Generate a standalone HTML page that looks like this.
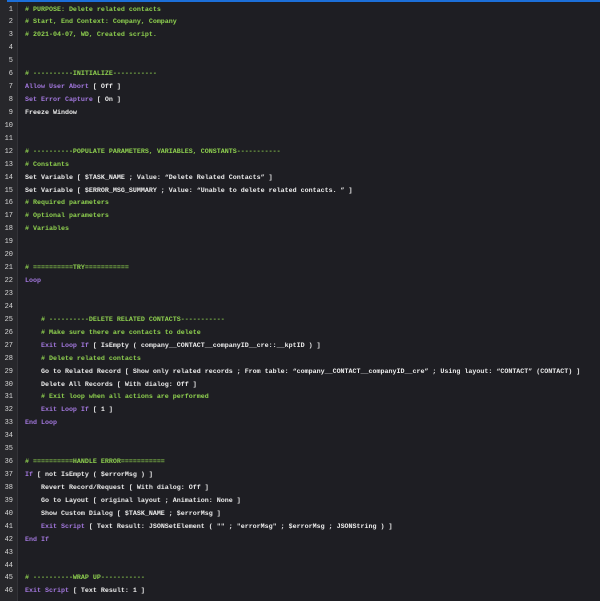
<!DOCTYPE html>
<html><head><style>
html,body{margin:0;padding:0;}
body{width:600px;height:601px;background:#1e1e23;position:relative;overflow:hidden;font-family:"Liberation Mono",monospace;}
#bar{position:absolute;left:7px;top:0;width:593px;height:2px;background:#1c6fd9;}
#gut{position:absolute;left:0;top:0;width:17px;height:601px;background:#27272b;border-right:1px solid #333338;}
.l{position:absolute;left:0;height:13px;width:600px;font-size:6.67px;line-height:13px;white-space:pre;color:#ededed;font-weight:bold;}
.n{position:absolute;left:0;width:13px;text-align:right;color:#d8d8d8;font-size:7px;font-weight:normal;}
.t{position:absolute;left:25px;}
.c{color:#8fd14f}.p{color:#a277dd}
</style></head><body>
<div id="gut"></div><div id="bar"></div>
<div id="code"></div>
<script>
var L=[
['c','# PURPOSE: Delete related contacts'],
['c','# Start, End Context: Company, Company'],
['c','# 2021-04-07, WD, Created script.'],
[],[],
['c','# ----------INITIALIZE-----------'],
['p','Allow User Abort',' [ Off ]'],
['p','Set Error Capture',' [ On ]'],
['w','Freeze Window'],
[],[],
['c','# ----------POPULATE PARAMETERS, VARIABLES, CONSTANTS-----------'],
['c','# Constants'],
['w','Set Variable [ $TASK_NAME ; Value: “Delete Related Contacts” ]'],
['w','Set Variable [ $ERROR_MSG_SUMMARY ; Value: “Unable to delete related contacts. ” ]'],
['c','# Required parameters'],
['c','# Optional parameters'],
['c','# Variables'],
[],[],
['c','# ==========TRY==========='],
['p','Loop'],
[],[],
['c','    # ----------DELETE RELATED CONTACTS-----------'],
['c','    # Make sure there are contacts to delete'],
['p','    Exit Loop If',' [ IsEmpty ( company__CONTACT__companyID__cre::__kptID ) ]'],
['c','    # Delete related contacts'],
['w','    Go to Related Record [ Show only related records ; From table: “company__CONTACT__companyID__cre” ; Using layout: “CONTACT” (CONTACT) ]'],
['w','    Delete All Records [ With dialog: Off ]'],
['c','    # Exit loop when all actions are performed'],
['p','    Exit Loop If',' [ 1 ]'],
['p','End Loop'],
[],[],
['c','# ==========HANDLE ERROR==========='],
['p','If',' [ not IsEmpty ( $errorMsg ) ]'],
['w','    Revert Record/Request [ With dialog: Off ]'],
['w','    Go to Layout [ original layout ; Animation: None ]'],
['w','    Show Custom Dialog [ $TASK_NAME ; $errorMsg ]'],
['p','    Exit Script',' [ Text Result: JSONSetElement ( "" ; "errorMsg" ; $errorMsg ; JSONString ) ]'],
['p','End If'],
[],[],
['c','# ----------WRAP UP-----------'],
['p','Exit Script',' [ Text Result: 1 ]']
];
var h='';
for(var i=0;i<L.length;i++){
 var y=3.5+i*12.93;var a=L[i];var t='';
 if(a.length){
  var s=a[1].replace(/&/g,'&amp;').replace(/</g,'&lt;');
  if(a[0]=='c')t='<span class="c">'+s+'</span>';
  else if(a[0]=='p')t='<span class="p">'+s+'</span>'+(a[2]||'');
  else t=s;
 }
 h+='<div class="l" style="top:'+y.toFixed(1)+'px"><span class="n">'+(i+1)+'</span><span class="t">'+t+'</span></div>';
}
document.getElementById('code').innerHTML=h;
</script>
</body></html>
